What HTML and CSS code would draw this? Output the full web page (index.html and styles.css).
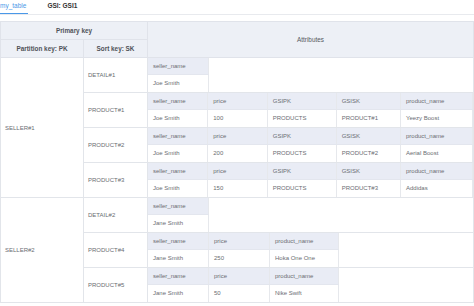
FILE: index.html
```html
<!DOCTYPE html>
<html>
<head>
<meta charset="utf-8">
<link rel="stylesheet" href="styles.css">
</head>
<body>
<div class="tabs">
  <span class="tab active">my_table</span>
  <span class="tab">GSI: GSI1</span>
</div>
<table class="grid">
  <colgroup><col class="c-pk"><col class="c-sk"><col class="c-attr"></colgroup>
  <thead>
    <tr><th colspan="2">Primary key</th><th rowspan="2" class="attr-head">Attributes</th></tr>
    <tr><th>Partition key: PK</th><th>Sort key: SK</th></tr>
  </thead>
  <tbody>
    <tr>
      <td rowspan="4" class="pk">SELLER#1</td>
      <td class="sk">DETAIL#1</td>
      <td class="attrs"><table class="inner">
        <tr class="ih"><td class="w-seller">seller_name</td></tr>
        <tr class="iv"><td>Joe Smith</td></tr>
      </table></td>
    </tr>
    <tr>
      <td class="sk">PRODUCT#1</td>
      <td class="attrs"><table class="inner">
        <tr class="ih"><td class="w-seller">seller_name</td><td class="w-price">price</td><td class="w-gsipk">GSIPK</td><td class="w-gsisk">GSISK</td><td class="w-pname-wide">product_name</td></tr>
        <tr class="iv"><td>Joe Smith</td><td>100</td><td>PRODUCTS</td><td>PRODUCT#1</td><td>Yeezy Boost</td></tr>
      </table></td>
    </tr>
    <tr>
      <td class="sk">PRODUCT#2</td>
      <td class="attrs"><table class="inner">
        <tr class="ih"><td class="w-seller">seller_name</td><td class="w-price">price</td><td class="w-gsipk">GSIPK</td><td class="w-gsisk">GSISK</td><td class="w-pname-wide">product_name</td></tr>
        <tr class="iv"><td>Joe Smith</td><td>200</td><td>PRODUCTS</td><td>PRODUCT#2</td><td>Aerial Boost</td></tr>
      </table></td>
    </tr>
    <tr>
      <td class="sk">PRODUCT#3</td>
      <td class="attrs"><table class="inner">
        <tr class="ih"><td class="w-seller">seller_name</td><td class="w-price">price</td><td class="w-gsipk">GSIPK</td><td class="w-gsisk">GSISK</td><td class="w-pname-wide">product_name</td></tr>
        <tr class="iv"><td>Joe Smith</td><td>150</td><td>PRODUCTS</td><td>PRODUCT#3</td><td>Addidas</td></tr>
      </table></td>
    </tr>
    <tr>
      <td rowspan="3" class="pk">SELLER#2</td>
      <td class="sk">DETAIL#2</td>
      <td class="attrs"><table class="inner">
        <tr class="ih"><td class="w-seller">seller_name</td></tr>
        <tr class="iv"><td>Jane Smith</td></tr>
      </table></td>
    </tr>
    <tr>
      <td class="sk">PRODUCT#4</td>
      <td class="attrs"><table class="inner">
        <tr class="ih"><td class="w-seller">seller_name</td><td class="w-price">price</td><td class="w-pname">product_name</td></tr>
        <tr class="iv"><td>Jane Smith</td><td>250</td><td>Hoka One One</td></tr>
      </table></td>
    </tr>
    <tr>
      <td class="sk">PRODUCT#5</td>
      <td class="attrs"><table class="inner">
        <tr class="ih"><td class="w-seller">seller_name</td><td class="w-price">price</td><td class="w-pname">product_name</td></tr>
        <tr class="iv"><td>Jane Smith</td><td>50</td><td>Nike Swift</td></tr>
      </table></td>
    </tr>
  </tbody>
</table>
</body>
</html>
```

FILE: styles.css
```css
html, body {
  margin: 0;
  padding: 0;
  background: #ffffff;
  overflow: hidden;
}
body {
  width: 474px;
  height: 306px;
  font-family: "Liberation Sans", Arial, sans-serif;
  font-size: 6px;
  color: #666a70;
}
.tabs {
  display: flex;
  gap: 18px;
  height: 14px;
  margin-left: -1px;
  border-bottom: 1px solid #e8eaee;
  margin-bottom: 6px;
}
.tab {
  font-size: 6.5px;
  line-height: 12px;
  padding: 0 0 0 1px;
  color: #333;
  font-weight: bold;
}
.tab.active {
  color: #4a98e8;
  font-weight: normal;
  border-bottom: 1.5px solid #4a98e8;
  padding-right: 2px;
}
.grid {
  border-collapse: collapse;
  table-layout: fixed;
  width: 474px;
}
.c-pk { width: 83px; }
.c-sk { width: 64px; }
.grid th {
  background: #edf0f6;
  color: #4f5258;
  font-weight: bold;
  font-size: 6.4px;
  height: 17px;
  padding: 0;
  border: 1px solid #e0e3ea;
  text-align: center;
  vertical-align: middle;
}
.grid th.attr-head {
  font-weight: normal;
  color: #55585e;
}
.grid > tbody > tr > td {
  border: 1px solid #e2e5ea;
  padding: 0;
  vertical-align: middle;
}
.grid td.pk, .grid td.sk {
  padding-left: 4px;
  color: #6a6d72;
}
.grid td.attrs {
  vertical-align: top;
  border-left: 1px solid #eceef1;
}
.inner {
  border-collapse: collapse;
}
.inner td {
  height: 16px;
  padding: 0 5px;
  line-height: 16px;
  white-space: nowrap;
  border-right: 1px solid #e6e8ec;
  color: #6a6d72;
}
.inner .ih td {
  background: #e9ecf5;
  border-bottom: 1px solid #e3e6ee;
}
.inner .iv td {
  height: 17px;
  line-height: 17px;
  background: #ffffff;
}
.w-seller { width: 50px; }
.w-price { width: 50px; }
.w-gsipk { width: 59px; }
.w-gsisk { width: 54px; }
.w-pname { width: 58px; }
.w-pname-wide { width: 62px; }
```
